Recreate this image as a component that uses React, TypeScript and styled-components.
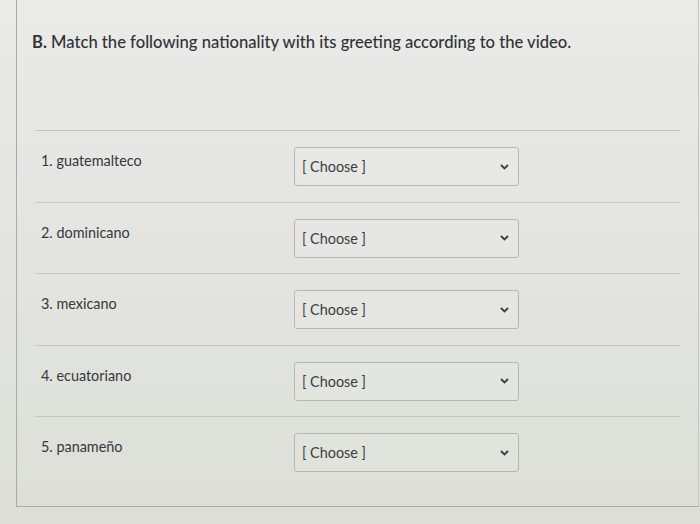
import styled, { createGlobalStyle } from 'styled-components';

const GlobalStyle = createGlobalStyle`
  html, body {
    margin: 0;
    padding: 0;
  }
  body {
    width: 700px;
    height: 524px;
    overflow: hidden;
    font-family: Lato, "Open Sans", sans-serif;
    color: #33373b;
    background: linear-gradient(180deg, #eaeae8 0%, #e4e5e1 45%, #dcded7 100%);
  }
`;

const StyledPage = styled.div`
  padding-left: 16px;
  height: 524px;
  box-sizing: border-box;
`;

const StyledPanel = styled.section`
  width: 683px;
  height: 507px;
  box-sizing: border-box;
  border-left: 1px solid #a9aba7;
  border-right: 1px solid #c4c6c1;
  border-bottom: 1px solid #a9aba7;
  padding: 32px 18px 0 16px;
`;

const StyledTitle = styled.h2`
  margin: 0 0 0 -1px;
  font-size: 16.6px;
  line-height: 20px;
  font-weight: 500;
  color: #2f3337;

  strong {
    font-weight: 700;
  }
`;

const StyledList = styled.div`
  margin: 78px 0 0 2px;
`;

const StyledRow = styled.div`
  display: flex;
  align-items: flex-start;
  height: 71.5px;
  box-sizing: border-box;
  padding: 16px 0 0 6px;
  border-top: 1px solid #c3c5c0;
`;

const StyledLabel = styled.div`
  width: 253px;
  padding-top: 4px;
  font-size: 14.4px;
  line-height: 20px;
  color: #34383c;
`;

const StyledSelect = styled.div`
  display: flex;
  align-items: center;
  justify-content: space-between;
  width: 225px;
  height: 39px;
  box-sizing: border-box;
  padding: 0 9px 0 7px;
  border: 1px solid #b5b7b2;
  border-radius: 3px;
  background: rgba(255, 255, 255, 0.1);
  font-size: 14.4px;
  color: #3a3e42;
`;

const StyledChevron = styled.svg`
  width: 9px;
  height: 6px;
  flex: none;
`;

const items = [
  '1. guatemalteco',
  '2. dominicano',
  '3. mexicano',
  '4. ecuatoriano',
  '5. panameño',
];

export default function App() {
  return (
    <>
      <GlobalStyle />
      <StyledPage>
        <StyledPanel>
          <StyledTitle>
            <strong>B.</strong> Match the following nationality with its greeting according to the video.
          </StyledTitle>
          <StyledList>
            {items.map((item) => (
              <StyledRow key={item}>
                <StyledLabel>{item}</StyledLabel>
                <StyledSelect>
                  <span>[ Choose ]</span>
                  <StyledChevron viewBox="0 0 9 6">
                    <path d="M1 1 L4.5 4.5 L8 1" fill="none" stroke="#3a3e42" strokeWidth="1.8" />
                  </StyledChevron>
                </StyledSelect>
              </StyledRow>
            ))}
          </StyledList>
        </StyledPanel>
      </StyledPage>
    </>
  );
}
